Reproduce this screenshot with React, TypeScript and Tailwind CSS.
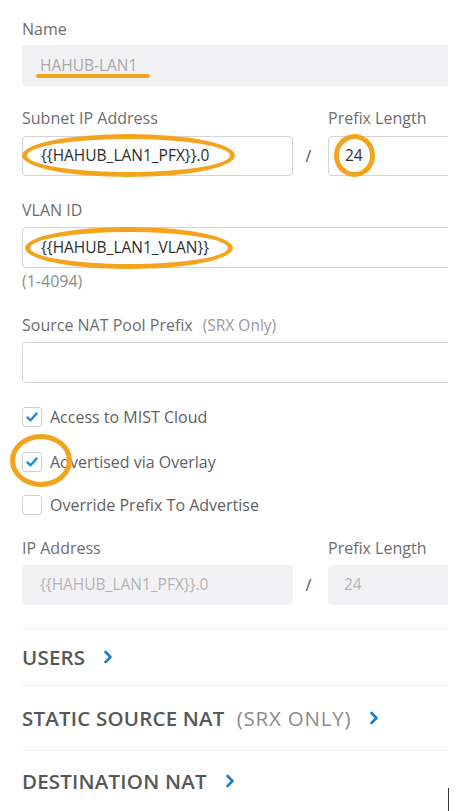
import React from 'react';

const font = { fontFamily: '"Open Sans", "Noto Sans", sans-serif' };

const Label = ({ children, className = '' }: { children: React.ReactNode; className?: string }) => (
  <div className={`h-5 leading-5 text-[16px] text-[#6e6e6e] whitespace-nowrap ${className}`}>{children}</div>
);

const Check = ({ checked, label, className = '' }: { checked: boolean; label: string; className?: string }) => (
  <div className={`flex items-center h-5 ${className}`}>
    <div className="w-[20px] h-[20px] rounded-[3px] border border-[#cfcfcf] bg-white flex items-center justify-center">
      {checked && (
        <svg width="14" height="14" viewBox="0 0 14 14">
          <path d="M2.5 7.5 L5.6 10.3 L11.5 3.6" fill="none" stroke="#1a8fe0" strokeWidth="2.4" strokeLinecap="round" strokeLinejoin="round" />
        </svg>
      )}
    </div>
    <span className="ml-[8px] text-[16px] text-[#5f5f5f]">{label}</span>
  </div>
);

const Chevron = () => (
  <svg width="10" height="14" viewBox="0 0 10 14" className="ml-[18px]">
    <path d="M2.5 2 L7.5 7 L2.5 12" fill="none" stroke="#1a7fd0" strokeWidth="2.6" strokeLinecap="round" strokeLinejoin="round" />
  </svg>
);

const Section = ({ title, note, className }: { title: string; note?: string; className: string }) => (
  <div className={`flex items-center border-b border-[#f1f1f1] ${className}`}>
    <span className="text-[20.5px] font-semibold text-[#575757] tracking-[0.2px]">{title}</span>
    {note && <span className="ml-[12px] text-[20.5px] text-[#8a8a8a] tracking-[0.8px]">{note}</span>}
    <Chevron />
  </div>
);

export default function App() {
  return (
    <div className="relative w-[474px] h-[811px] bg-white overflow-hidden" style={font}>
      <div className="ml-[22px] w-[426px] overflow-hidden pt-[19px]">
        <Label className="mb-[6px]">Name</Label>
        <div className="h-[41px] w-[440px] rounded-[4px] bg-[#f2f2f4] flex items-center pl-[18px] text-[15.5px] text-[#a9a9a9]">
          HAHUB-LAN1
        </div>

        <div className="mt-[22px] grid grid-cols-[271px_35px_1fr]">
          <Label className="mb-[8px]">Subnet IP Address</Label>
          <div />
          <Label className="mb-[8px]">Prefix Length</Label>
          <div className="h-[40px] rounded-[4px] border border-[#d4d4d4] flex items-center pl-[18px] text-[15.5px] text-[#2e2e2e]">
            {'{{HAHUB_LAN1_PFX}}.0'}
          </div>
          <div className="flex items-center justify-center text-[16px] text-[#555] pr-[4px]">/</div>
          <div className="h-[40px] w-[140px] rounded-[4px] border border-[#d4d4d4] flex items-center pl-[16px] text-[15.5px] text-[#2e2e2e]">
            24
          </div>
        </div>

        <Label className="mt-[24px] mb-[7px]">VLAN ID</Label>
        <div className="h-[41px] w-[440px] rounded-[4px] border border-[#d4d4d4] flex items-center pl-[18px] text-[15.5px] text-[#2e2e2e]">
          {'{{HAHUB_LAN1_VLAN}}'}
        </div>
        <Label className="mt-[3px] text-[#8d8d8d]">(1-4094)</Label>

        <Label className="mt-[24px] mb-[7px]">
          Source NAT Pool Prefix<span className="ml-[10px] text-[15.5px] text-[#9a9a9a]">(SRX Only)</span>
        </Label>
        <div className="h-[41px] w-[440px] rounded-[4px] border border-[#d4d4d4]" />

        <Check className="mt-[24px]" checked label="Access to MIST Cloud" />
        <Check className="mt-[25px]" checked label="Advertised via Overlay" />
        <Check className="mt-[23px]" checked={false} label="Override Prefix To Advertise" />

        <div className="mt-[23px] grid grid-cols-[271px_35px_1fr]">
          <Label className="mb-[7px]">IP Address</Label>
          <div />
          <Label className="mb-[7px]">Prefix Length</Label>
          <div className="h-[40px] rounded-[4px] bg-[#f2f2f4] flex items-center pl-[18px] text-[15.5px] text-[#b4b4b4]">
            {'{{HAHUB_LAN1_PFX}}.0'}
          </div>
          <div className="flex items-center justify-center text-[16px] text-[#555] pr-[4px]">/</div>
          <div className="h-[40px] w-[140px] rounded-[4px] bg-[#f2f2f4] flex items-center pl-[16px] text-[15.5px] text-[#b4b4b4]">
            24
          </div>
        </div>

        <div className="mt-[23px] border-t border-[#f1f1f1]" />
        <Section title="USERS" className="h-[57px]" />
        <Section title="STATIC SOURCE NAT" note="(SRX ONLY)" className="h-[65px]" />
        <div className="flex items-center h-[60px]">
          <span className="text-[20.5px] font-semibold text-[#575757] tracking-[0.2px]">DESTINATION NAT</span>
          <Chevron />
        </div>
      </div>

      {/* annotation marks */}
      <div className="absolute left-[36px] top-[74px] w-[114px] h-[4px] rounded-full bg-[#f4a41c]" />
      <div className="absolute left-[22px] top-[134px] w-[213px] h-[43px] rounded-[50%] border-[5px] border-[#f4a41c]" />
      <div className="absolute left-[334px] top-[134px] w-[41px] h-[43px] rounded-[50%] border-[5px] border-[#f4a41c]" />
      <div className="absolute left-[25px] top-[227px] w-[208px] h-[42px] rounded-[50%] border-[5px] border-[#f4a41c]" />
      <div className="absolute left-[10px] top-[434px] w-[62px] h-[53px] rounded-[50%] border-[5px] border-[#f4a41c]" />

      <div className="absolute left-[448px] top-[788px] w-[1px] h-[23px] bg-[#333]" />
    </div>
  );
}
